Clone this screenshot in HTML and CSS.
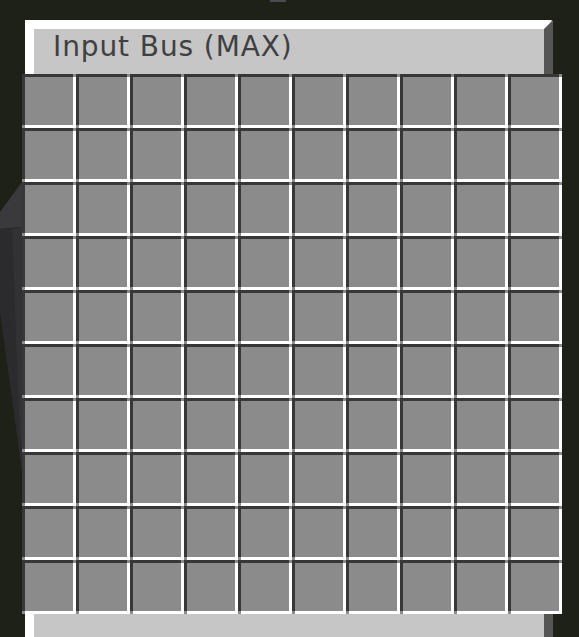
FILE: index.html
```html
<!DOCTYPE html>
<html lang="en">
<head>
  <meta charset="UTF-8">
  <meta name="viewport" content="width=device-width, initial-scale=1.0">
  <title>Input Bus (MAX)</title>
  <link rel="stylesheet" href="styles.css">
</head>
<body>
  <!-- world behind the gui -->
  <svg class="scenery" width="579" height="637" viewBox="0 0 579 637">
    <rect x="270" y="0" width="16" height="2" fill="#4b4b52"/>
    <polygon points="0,212 22,182 22,227 0,229" fill="#3a3a3c"/>
    <polygon points="0,229 22,227 22,472 0,312" fill="#2b2b2d"/>
    <polygon points="12,229 22,227 22,440 20,440" fill="#323234"/>
  </svg>

  <div class="panel">
    <div class="panel-title">Input Bus (MAX)</div>
    <div class="slots" id="slots"></div>
  </div>

<script>
const slots = document.getElementById("slots");
for (let i = 0; i < 100; i++) {
  const slot = document.createElement("div");
  slot.className = "slot";
  slots.appendChild(slot);
}
</script>
</body>
</html>
```

FILE: styles.css
```css
* {
  margin: 0;
  padding: 0;
  box-sizing: border-box;
}

body {
  background: #1e2117;
  font-family: 'DejaVu Sans', sans-serif;
  height: 637px;
  overflow: hidden;
  position: relative;
}

.scenery {
  position: absolute;
  top: 0;
  left: 0;
}

/* Gui background */
.panel {
  position: relative;
  margin: 20px 0 0 25px;
  width: 528px;
  height: 640px;
  background: #c6c6c6;
  border-top: 9px solid #ffffff;
  border-left: 9px solid #ffffff;
  border-right: 9px solid #555555;
  border-top-right-radius: 3px;
}

.panel-title {
  height: 45px;
  padding: 1px 0 0 19px;
  line-height: 33px;
  font-size: 28px;
  letter-spacing: 0.9px;
  color: #404040;
}

/* Item slots */
.slots {
  display: grid;
  grid-template-columns: repeat(10, 54px);
  grid-auto-rows: 54px;
  margin-left: -12px;
  width: 540px;
}

.slot {
  position: relative;
  background: #8b8b8b;
  box-shadow: inset 3px 3px 0 #373737, inset -3px -3px 0 #ffffff;
}

.slot::before,
.slot::after {
  content: "";
  position: absolute;
  width: 3px;
  height: 3px;
  background: #8b8b8b;
}

.slot::before {
  top: 0;
  right: 0;
}

.slot::after {
  bottom: 0;
  left: 0;
}
```
